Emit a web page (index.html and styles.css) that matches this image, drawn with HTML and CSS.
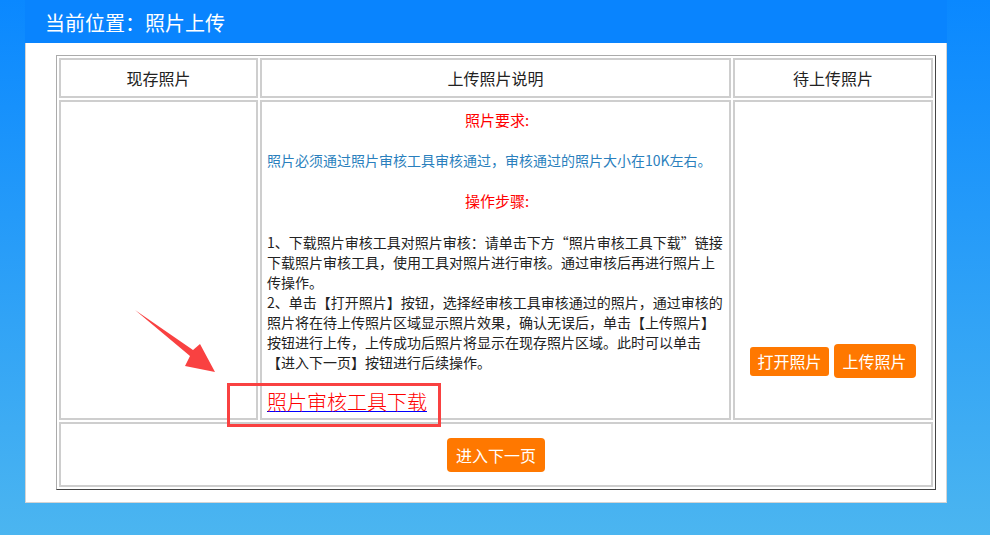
FILE: index.html
```html
<!DOCTYPE html>
<html lang="zh-CN">
<head>
    <meta charset="UTF-8">
    <meta name="viewport" content="width=device-width, initial-scale=1.0">
    <title>照片上传</title>
    <link rel="stylesheet" href="styles.css">
</head>
<body>
<div class="page">
    <div class="panel">
        <div class="panel-title">当前位置：照片上传</div>
        <div class="panel-body">
            <table class="upload-table">
                <colgroup>
                    <col class="col-current">
                    <col class="col-desc">
                    <col class="col-pending">
                </colgroup>
                <tr class="row-head">
                    <th>现存照片</th>
                    <th>上传照片说明</th>
                    <th>待上传照片</th>
                </tr>
                <tr class="row-main">
                    <td class="current-photo"></td>
                    <td class="desc">
                        <p class="desc-title">照片要求:</p>
                        <p class="desc-note">照片必须通过照片审核工具审核通过，审核通过的照片大小在10K左右。</p>
                        <p class="desc-title">操作步骤:</p>
                        <p class="desc-steps">1、下载照片审核工具对照片审核：请单击下方“照片审核工具下载”链接下载照片审核工具，使用工具对照片进行审核。通过审核后再进行照片上传操作。<br>2、单击【打开照片】按钮，选择经审核工具审核通过的照片，通过审核的照片将在待上传照片区域显示照片效果，确认无误后，单击【上传照片】按钮进行上传，上传成功后照片将显示在现存照片区域。此时可以单击【进入下一页】按钮进行后续操作。</p>
                        <a class="tool-link" href="#"><span>照片审核工具下载</span></a>
                    </td>
                    <td class="pending">
                        <div class="actions">
                            <button type="button" class="btn btn-open">打开照片</button>
                            <button type="button" class="btn btn-upload">上传照片</button>
                        </div>
                    </td>
                </tr>
                <tr class="row-next">
                    <td colspan="3">
                        <button type="button" class="btn btn-next">进入下一页</button>
                    </td>
                </tr>
            </table>
        </div>
    </div>

    <!-- 提示标注：箭头和红框 -->
    <svg class="annotation" width="990" height="535" viewBox="0 0 990 535">
        <polygon points="135,310 193,350 200,344 215,372 185,366 190,356" fill="#f94141"/>
        <rect x="228.5" y="384.5" width="211" height="41" fill="none" stroke="#f94141" stroke-width="3"/>
    </svg>
</div>
</body>
</html>
```

FILE: styles.css
```css
body {
    margin: 0;
    min-height: 535px;
    font-family: "Microsoft YaHei", "Noto Sans CJK SC", sans-serif;
    background: linear-gradient(#0a88ff, #4bb5f0);
}

.page {
    position: relative;
    height: 535px;
}

.panel {
    width: 922px;
    margin-left: 25px;
}

.panel-title {
    height: 43px;
    line-height: 45px;
    padding-left: 20px;
    font-size: 20px;
    color: #fff;
    background-color: #0984fe;
}

.panel-body {
    background-color: #fff;
    border: 1px solid #d4d4d4;
    border-top: none;
    padding: 12px 10px 12px 30px;
}

.upload-table {
    width: 880px;
    table-layout: fixed;
    border-collapse: separate;
    border-spacing: 2px;
    border: 1px solid;
    border-color: #ababab #444 #444 #ababab;
}

.col-current {
    width: 199px;
}

.col-desc {
    width: 471px;
}

.col-pending {
    width: 200px;
}

.upload-table th,
.upload-table td {
    border: 2px solid #cecece;
    padding: 0;
}

.row-head {
    height: 40px;
}

.row-head th {
    font-size: 16px;
    font-weight: normal;
    color: #222;
}

.row-main {
    height: 320px;
}

.desc {
    vertical-align: top;
    padding: 7px 2px 0 5px !important;
}

.desc p {
    margin: 0;
}

.desc-title {
    text-align: center;
    font-size: 15px;
    line-height: 22px;
    color: #ff0000;
}

.desc-note {
    margin: 19px 0 20px !important;
    font-size: 14px;
    line-height: 20px;
    color: #2a7fbd;
}

.desc-steps {
    margin-top: 20px !important;
    font-size: 14px;
    line-height: 20px;
    color: #222;
}

.tool-link {
    display: inline-block;
    margin-top: 18px;
    font-size: 20px;
    font-weight: 300;
    line-height: 24px;
    color: #0000ff;
    text-decoration: underline;
    text-decoration-thickness: 1px;
}

.tool-link span {
    color: #ff0000;
}

.pending {
    vertical-align: bottom;
    padding-bottom: 40px !important;
}

.actions {
    display: flex;
    justify-content: center;
    align-items: center;
    gap: 5px;
}

.btn {
    border: none;
    border-radius: 3px;
    background-color: #ff7800;
    color: #fff;
    font-family: inherit;
    font-size: 16px;
    cursor: pointer;
}

.btn-open {
    height: 29px;
    line-height: 29px;
    padding: 0 7px;
}

.btn-upload {
    height: 34px;
    line-height: 34px;
    padding: 0 9px;
    border-radius: 4px;
}

.row-next {
    height: 65px;
}

.row-next td {
    text-align: center;
}

.btn-next {
    height: 34px;
    line-height: 34px;
    padding: 0 9px;
    border-radius: 4px;
}

.annotation {
    position: absolute;
    left: 0;
    top: 0;
    pointer-events: none;
}
```
